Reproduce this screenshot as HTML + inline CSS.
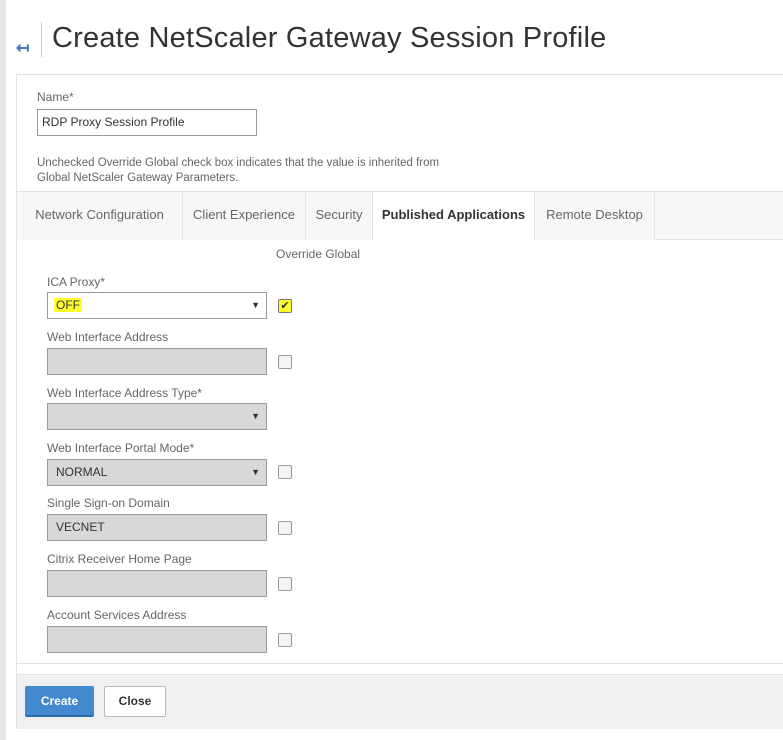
<!DOCTYPE html><html><head><style>
body{margin:0;width:783px;height:740px;background:#fff;font-family:"Liberation Sans",sans-serif;position:relative;overflow:hidden;color:#555}
.a{position:absolute}
.lbl{position:absolute;left:47px;font-size:12px;color:#666}
.inp{position:absolute;left:47px;width:218px;height:25px;border:1px solid #999;background:#d8d8d8;font-size:12px;color:#333;line-height:25px;box-sizing:content-box}
.inp span{padding-left:8px}
.arr{position:absolute;right:6px;top:0;font-size:9px;color:#333}
.cb{position:absolute;left:278px;width:12px;height:12px;border:1px solid #999;border-radius:2px;background:#f4f4f4}
.tab{position:absolute;top:192px;height:48px;line-height:46px;font-size:13px;color:#666;text-align:center;border-right:1px solid #e2e2e2;background:#f7f7f7}
</style></head><body>
<div class="a" style="left:0;top:0;width:6px;height:740px;background:#e6e6e6"></div>
<div class="a" style="left:16px;top:38px;font-size:16px;color:#3a7cc8;font-weight:bold">↤</div>
<div class="a" style="left:41px;top:22px;width:1px;height:35px;background:#ccc"></div>
<div class="a" style="left:52px;top:22px;font-size:29px;color:#333;letter-spacing:0.2px">Create NetScaler Gateway Session Profile</div>
<div class="a" style="left:16px;top:74px;width:780px;height:655px;border:1px solid #e2e2e2;box-sizing:border-box"></div>
<div class="a" style="left:37px;top:90px;font-size:12px;color:#666">Name*</div>
<div class="a" style="left:37px;top:109px;width:220px;height:27px;border:1px solid #999;font-size:12px;color:#333;line-height:25px;padding-left:4px;box-sizing:border-box">RDP Proxy Session Profile</div>
<div class="a" style="left:37px;top:156px;font-size:11.5px;color:#666;line-height:15px">Unchecked Override Global check box indicates that the value is inherited from<br>Global NetScaler Gateway Parameters.</div>
<div class="a" style="left:17px;top:191px;width:766px;height:49px;border-top:1px solid #e2e2e2;border-bottom:1px solid #e2e2e2;background:#f7f7f7;box-sizing:border-box"></div>
<div class="tab" style="left:17px;width:165px">Network Configuration</div>
<div class="tab" style="left:183px;width:122px">Client Experience</div>
<div class="tab" style="left:306px;width:66px">Security</div>
<div class="tab" style="left:373px;width:161px;background:#fff;color:#333;font-weight:bold;height:49px">Published Applications</div>
<div class="tab" style="left:535px;width:119px">Remote Desktop</div>
<div class="a" style="left:276px;top:247px;font-size:12px;color:#666">Override Global</div>

<div class="lbl" style="top:275px">ICA Proxy*</div>
<div class="inp" style="top:292px;background:#fff"><span style="background:#ffff30;padding:0 2px;margin-left:6px">OFF</span><span class="arr">▼</span></div>
<div class="cb" style="top:299px;background:#ffff30;border-color:#777;color:#333;font-size:11px;line-height:12px;text-align:center">✔</div>

<div class="lbl" style="top:330px">Web Interface Address</div>
<div class="inp" style="top:348px"></div><div class="cb" style="top:355px"></div>

<div class="lbl" style="top:386px">Web Interface Address Type*</div>
<div class="inp" style="top:403px"><span class="arr">▼</span></div>

<div class="lbl" style="top:441px">Web Interface Portal Mode*</div>
<div class="inp" style="top:459px"><span>NORMAL</span><span class="arr">▼</span></div><div class="cb" style="top:465px"></div>

<div class="lbl" style="top:496px">Single Sign-on Domain</div>
<div class="inp" style="top:514px"><span>VECNET</span></div><div class="cb" style="top:521px"></div>

<div class="lbl" style="top:552px">Citrix Receiver Home Page</div>
<div class="inp" style="top:570px"></div><div class="cb" style="top:577px"></div>

<div class="lbl" style="top:608px">Account Services Address</div>
<div class="inp" style="top:626px"></div><div class="cb" style="top:633px"></div>

<div class="a" style="left:17px;top:663px;width:766px;height:1px;background:#e2e2e2"></div>
<div class="a" style="left:17px;top:674px;width:766px;height:54px;background:#f0f0f0;border-top:1px solid #e2e2e2"></div>
<div class="a" style="left:25px;top:686px;width:69px;height:31px;background:#4389cf;border-bottom:2px solid #2a6db4;border-radius:2px;box-sizing:border-box;color:#fff;font-weight:bold;font-size:12px;text-align:center;line-height:30px">Create</div>
<div class="a" style="left:104px;top:686px;width:62px;height:31px;background:#fff;border:1px solid #bbb;border-radius:2px;box-sizing:border-box;color:#333;font-weight:bold;font-size:12px;text-align:center;line-height:29px">Close</div>
</body></html>
